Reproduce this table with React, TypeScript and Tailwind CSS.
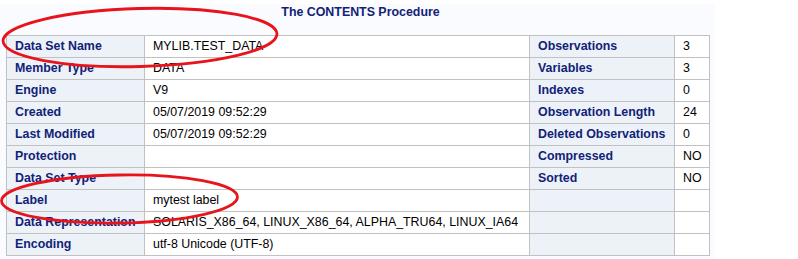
import React from "react";

type Row = { label: string; value: string; label2?: string; value2?: string };

const rows: Row[] = [
  { label: "Data Set Name", value: "MYLIB.TEST_DATA", label2: "Observations", value2: "3" },
  { label: "Member Type", value: "DATA", label2: "Variables", value2: "3" },
  { label: "Engine", value: "V9", label2: "Indexes", value2: "0" },
  { label: "Created", value: "05/07/2019 09:52:29", label2: "Observation Length", value2: "24" },
  { label: "Last Modified", value: "05/07/2019 09:52:29", label2: "Deleted Observations", value2: "0" },
  { label: "Protection", value: "", label2: "Compressed", value2: "NO" },
  { label: "Data Set Type", value: "", label2: "Sorted", value2: "NO" },
  { label: "Label", value: "mytest label" },
  { label: "Data Representation", value: "SOLARIS_X86_64, LINUX_X86_64, ALPHA_TRU64, LINUX_IA64" },
  { label: "Encoding", value: "utf-8 Unicode (UTF-8)" },
];

const head = "h-[22px] border border-[#c1c1c1] bg-[#edf2f9] px-[8px] py-0 text-left font-bold text-[#112277] whitespace-nowrap";
const cell = "h-[22px] border border-[#c1c1c1] bg-white px-[8px] py-0 text-left text-[#000] whitespace-nowrap";

export default function App() {
  return (
    <div className="relative h-[259px] w-[798px] overflow-hidden bg-white pt-[4px] font-['Liberation_Sans',Arial,sans-serif] text-[12.4px]">
      <div className="h-[255px] w-[715px] bg-[#fafbfe]">
        <div className="h-[16px] pl-[6px] text-center leading-[16px] font-bold text-[#112277]">
          The CONTENTS Procedure
        </div>
        <table className="ml-[6px] mt-[15px] w-[703px] table-fixed border-collapse">
          <colgroup>
            <col className="w-[138px]" />
            <col className="w-[385px]" />
            <col className="w-[145px]" />
            <col className="w-[35px]" />
          </colgroup>
          <tbody>
            {rows.map((row) => (
              <tr key={row.label}>
                <th className={head}>{row.label}</th>
                <td className={cell}>{row.value}</td>
                <th className={head}>{row.label2 ?? ""}</th>
                <td className={cell}>{row.value2 ?? ""}</td>
              </tr>
            ))}
          </tbody>
        </table>
      </div>

      {/* hand-drawn highlight marks */}
      <svg className="pointer-events-none absolute left-0 top-0" width="798" height="259" viewBox="0 0 798 259">
        <ellipse cx="140" cy="37.5" rx="137" ry="29" transform="rotate(-1.5 140 37.5)" fill="none" stroke="#e8141c" strokeWidth="2.8" />
        <ellipse cx="119.5" cy="199" rx="118" ry="24" transform="rotate(-1 119.5 199)" fill="none" stroke="#e8141c" strokeWidth="2.8" />
      </svg>
    </div>
  );
}
